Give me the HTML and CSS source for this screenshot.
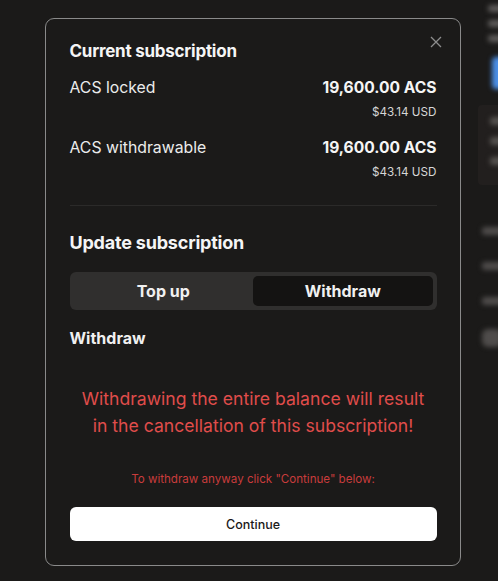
FILE: index.html
```html
<!DOCTYPE html>
<html>
<head>
<meta charset="utf-8">
<link rel="stylesheet" href="styles.css">
</head>
<body>
<div class="page">
  <div class="modal">
    <button class="close" aria-label="Close">
      <svg width="12" height="12" viewBox="0 0 12 12"><path d="M1 1L11 11M11 1L1 11" stroke="#8d8d8d" stroke-width="1.3" fill="none"/></svg>
    </button>
    <h2 class="title title-current">Current subscription</h2>
    <div class="row">
      <div class="label">ACS locked</div>
      <div class="values">
        <div class="amount">19,600.00 ACS</div>
        <div class="usd">$43.14 USD</div>
      </div>
    </div>
    <div class="row row2">
      <div class="label">ACS withdrawable</div>
      <div class="values">
        <div class="amount">19,600.00 ACS</div>
        <div class="usd">$43.14 USD</div>
      </div>
    </div>
    <div class="divider"></div>
    <h2 class="title">Update subscription</h2>
    <div class="tabs">
      <div class="tab">Top up</div>
      <div class="tab active">Withdraw</div>
    </div>
    <div class="section-label">Withdraw</div>
    <p class="warning">Withdrawing the entire balance will result<br>in the cancellation of this subscription!</p>
    <p class="hint">To withdraw anyway click "Continue" below:</p>
    <button class="continue">Continue</button>
  </div>
  <div class="side">
    <div class="blur bar b1"></div>
    <div class="blur bar b2"></div>
    <div class="blur bar b3"></div>
    <div class="blur blue"></div>
    <div class="panel">
      <div class="blur bar p1"></div>
      <div class="blur bar p2"></div>
      <div class="blur bar p3"></div>
    </div>
    <div class="blur bar s1"></div>
    <div class="blur bar s2"></div>
    <div class="blur bar s3"></div>
    <div class="blur dot"></div>
  </div>
</div>
</body>
</html>
```
FILE: styles.css
```css
* { box-sizing: border-box; }
html, body { margin: 0; padding: 0; }
body {
  background: #1b1a19;
  font-family: Inter, "Liberation Sans", sans-serif;
  color: #f2f2f2;
  width: 498px;
  height: 581px;
  overflow: hidden;
}
.page {
  display: flex;
  align-items: flex-start;
  padding-left: 45px;
  padding-top: 18px;
}
.modal {
  position: relative;
  width: 416px;
  height: 548px;
  flex: none;
  background: #1b1a19;
  border: 1.5px solid #8a8a8a;
  border-radius: 9px;
  padding: 20px 23.5px 0 23.5px;
  display: flex;
  flex-direction: column;
}
.close {
  position: absolute;
  top: 17px;
  right: 18px;
  background: none;
  border: none;
  padding: 0;
  width: 12px;
  height: 12px;
  display: flex;
}
.title {
  margin: 0;
  font-size: 18px;
  line-height: 24px;
  font-weight: 700;
  letter-spacing: -0.2px;
  color: #f5f5f5;
}
.title-current {
  font-size: 17px;
  letter-spacing: -0.25px;
}
.row {
  display: flex;
  justify-content: space-between;
  margin-top: 14px;
}
.row2 { margin-top: 17px; }
.label {
  font-size: 15.8px;
  line-height: 22px;
  color: #ececec;
}
.values {
  display: flex;
  flex-direction: column;
  align-items: flex-end;
}
.amount {
  font-size: 15.6px;
  line-height: 22px;
  font-weight: 700;
  color: #f5f5f5;
}
.usd {
  margin-top: 5px;
  font-size: 11.7px;
  line-height: 16px;
  color: #d6d6d6;
}
.divider {
  height: 1px;
  background: #2b2a29;
  margin: 25px 0 25px 0;
}
.tabs {
  margin-top: 17px;
  height: 38px;
  background: #302f2e;
  border-radius: 6px;
  padding: 4px;
  display: grid;
  grid-template-columns: 1fr 1fr;
}
.tab {
  display: flex;
  align-items: center;
  justify-content: center;
  font-size: 16px;
  font-weight: 700;
  color: #f0f0f0;
  border-radius: 5px;
}
.tab.active { background: #141312; }
.section-label {
  margin-top: 17px;
  font-size: 16px;
  line-height: 22px;
  font-weight: 700;
  color: #f0f0f0;
}
.warning {
  margin: 36px 0 0 0;
  text-align: center;
  font-size: 17.6px;
  line-height: 27px;
  color: #e04d4b;
}
.hint {
  margin: 32px 0 0 0;
  text-align: center;
  font-size: 11.6px;
  line-height: 16px;
  color: #c93c3c;
}
.continue {
  margin-top: 20px;
  height: 34px;
  background: #ffffff;
  border: none;
  border-radius: 6px;
  font-family: Inter, "Liberation Sans", sans-serif;
  font-size: 12.5px;
  font-weight: 500;
  color: #1b1a19;
}
.side {
  margin-left: 9px;
  margin-top: -18px;
  width: 40px;
  display: flex;
  flex-direction: column;
  align-items: flex-start;
}
.blur { filter: blur(2.5px); }
.bar { background: #5e5b5a; height: 7px; border-radius: 3px; }
.b1 { margin-top: 5px; margin-left: 18px; width: 24px; }
.b2 { margin-top: 8px; margin-left: 18px; width: 24px; }
.b3 { margin-top: 8px; margin-left: 18px; width: 24px; }
.blue { margin-top: 15px; margin-left: 22px; width: 20px; height: 32px; background: #4b8fe6; border-radius: 4px; }
.panel {
  margin-top: 16px;
  margin-left: 8px;
  width: 34px;
  height: 80px;
  background: #221f1e;
  border-radius: 4px 0 0 4px;
  padding: 12px 0 0 12px;
  display: flex;
  flex-direction: column;
  gap: 12px;
}
.p1, .p2, .p3 { width: 22px; height: 8px; background: #55524f; }
.s1 { margin-top: 42px; margin-left: 12px; width: 30px; height: 8px; background: #4f4c4b; }
.s2 { margin-top: 27px; margin-left: 12px; width: 30px; height: 8px; background: #4f4c4b; }
.s3 { margin-top: 27px; margin-left: 12px; width: 30px; height: 8px; background: #4f4c4b; }
.dot { margin-top: 24px; margin-left: 12px; width: 20px; height: 18px; border-radius: 6px; background: #4f4c4b; }
```
